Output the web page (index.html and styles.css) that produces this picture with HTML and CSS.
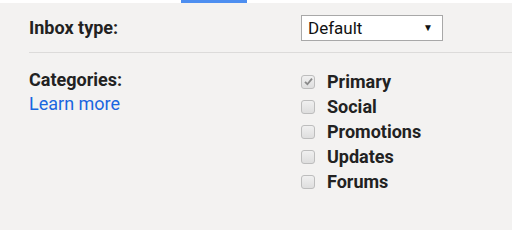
FILE: index.html
```html
<!DOCTYPE html>
<html lang="en">
<head>
  <meta charset="UTF-8">
  <title>Inbox settings</title>
  <link rel="stylesheet" href="styles.css">
</head>
<body>
  <div class="tabs"><span class="tab-active"></span></div>

  <div class="setting">
    <div class="label">Inbox type:</div>
    <div class="value">
      <div class="select">
        <span>Default</span>
        <span class="arrow">&#9660;</span>
      </div>
    </div>
  </div>

  <div class="divider"></div>

  <div class="setting top">
    <div class="label">
      Categories:
      <a href="#" class="link">Learn more</a>
    </div>
    <div class="value">
      <ul class="cats">
        <li><span class="box checked"><svg width="9" height="9" viewBox="0 0 9 9"><path d="M1 4.8 L3.4 7.2 L8 1.6" fill="none" stroke="#8a8a8a" stroke-width="1.8"/></svg></span>Primary</li>
        <li><span class="box"></span>Social</li>
        <li><span class="box"></span>Promotions</li>
        <li><span class="box"></span>Updates</li>
        <li><span class="box"></span>Forums</li>
      </ul>
    </div>
  </div>
</body>
</html>
```

FILE: styles.css
```css
body {
    margin: 0;
    background: #f3f2f1;
    font-family: Roboto, Arial, sans-serif;
    color: #222;
    height: 230px;
    overflow: hidden;
}
.tabs {
    height: 3px;
    background: #fff;
    position: relative;
}
.tab-active {
    position: absolute;
    left: 181px;
    top: 0;
    width: 66px;
    height: 3px;
    background: #4d8ef0;
}
.setting {
    display: flex;
    padding-left: 29px;
    align-items: center;
    height: 49px;
}
.setting.top {
    align-items: flex-start;
    height: auto;
    padding-top: 16px;
}
.label {
    width: 272px;
    font-size: 18px;
    font-weight: bold;
    color: #222;
}
.link {
    display: block;
    margin-top: 3px;
    font-weight: normal;
    color: #1a66e0;
    text-decoration: none;
}
.select {
    height: 24px;
    border: 1px solid #a8a8a8;
    background: #fff;
    box-sizing: content-box;
    display: flex;
    align-items: center;
    justify-content: space-between;
    padding: 0 9px 0 6px;
    width: 125px;
    font-size: 17px;
    color: #111;
}
.arrow {
    font-size: 10px;
    color: #111;
}
.divider {
    height: 1px;
    background: #dcdbda;
    margin-left: 29px;
}
.cats {
    list-style: none;
    margin: 0;
    padding: 0;
}
.cats li {
    display: flex;
    align-items: center;
    height: 25px;
    font-size: 18px;
    font-weight: bold;
    color: #222;
}
.box {
    width: 12px;
    height: 12px;
    border: 1px solid #bdbdbd;
    border-radius: 3px;
    background: linear-gradient(#f0f0f0, #dedede);
    margin-right: 12px;
    display: flex;
    align-items: center;
    justify-content: center;
}
```
